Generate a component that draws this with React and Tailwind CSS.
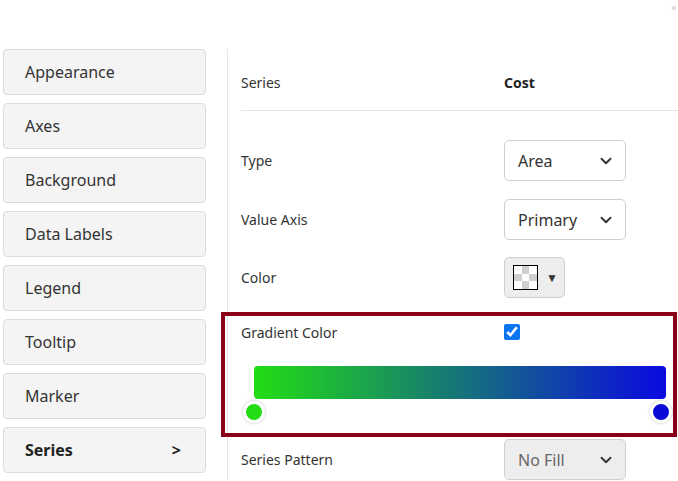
import { ChevronDown } from 'lucide-react';

const tabs = ['Appearance', 'Axes', 'Background', 'Data Labels', 'Legend', 'Tooltip', 'Marker', 'Series'];

function Select({ value, muted }) {
  return (
    <div className={`flex h-[41px] w-[122px] items-center justify-between rounded-[5px] border border-[#cfcfcf] pl-[13px] pr-[10px] text-[16px] ${muted ? 'bg-[#ededed] text-[#666]' : 'bg-white text-[#333]'}`}>
      <span>{value}</span>
      <ChevronDown size={18} strokeWidth={2.5} className="text-[#333]" />
    </div>
  );
}

export default function App() {
  return (
    <div className="relative h-[481px] w-[678px] overflow-hidden bg-white font-['Liberation_Sans',Arial,sans-serif] text-[#333]">
      <span className="absolute right-[1px] top-[2px] text-[11px] leading-none text-[#ccc]">×</span>
      <div className="flex pt-[49px]">
        <div className="flex w-[206px] flex-col gap-[8px] pl-[3px]">
          {tabs.map((t) => (
            <div key={t} className={`flex h-[46px] items-center justify-between rounded-[4px] border border-[#dcdcdc] bg-[#f4f4f4] pl-[21px] pr-[24px] text-[16px] ${t === 'Series' ? 'font-bold text-[#222]' : 'text-[#333]'}`}>
              <span>{t}</span>
              {t === 'Series' && <span>&gt;</span>}
            </div>
          ))}
        </div>
        <div className="ml-[21px] flex-1 border-l border-[#e8e8e8] pl-[13px] text-[14px]">
          <div className="flex h-[62px] items-center border-b border-[#e5e5e5] pt-[6px]">
            <span className="w-[263px]">Series</span>
            <span className="font-bold text-[#222]">Cost</span>
          </div>
          <div className="mt-[29px] flex h-[41px] items-center">
            <span className="w-[263px]">Type</span>
            <Select value="Area" />
          </div>
          <div className="mt-[18px] flex h-[41px] items-center">
            <span className="w-[263px]">Value Axis</span>
            <Select value="Primary" />
          </div>
          <div className="mt-[17px] flex h-[41px] items-center">
            <span className="w-[263px]">Color</span>
            <div className="flex h-[41px] w-[61px] items-center gap-[8px] rounded-[5px] border border-[#cfcfcf] bg-[#ededed] pl-[8px]">
              <div className="grid h-[25px] w-[25px] grid-cols-3 grid-rows-3 border border-black">
                {[0, 1, 0, 1, 0, 1, 0, 1, 0].map((c, i) => (
                  <div key={i} className={c ? 'bg-[#cfcfcf]' : 'bg-white'} />
                ))}
              </div>
              <span className="text-[12px] text-[#333]">▼</span>
            </div>
          </div>
          <div className="-ml-[20px] mt-[14px] h-[125px] w-[456px] border-[4px] border-[#8b0019] pl-[16px] pt-[6px]">
            <div className="flex h-[20px] items-center">
              <span className="w-[263px]">Gradient Color</span>
              <input type="checkbox" defaultChecked className="h-[16px] w-[16px] accent-[#0b74f0]" />
            </div>
            <div className="relative ml-[13px] mt-[24px] h-[33px] w-[412px] rounded-[4px] bg-[linear-gradient(to_right,#22dd14,#0a0ae0)]">
              <div className="absolute left-[-11px] top-[35px] h-[22px] w-[22px] rounded-full border-[3px] border-white bg-[#22dd14] shadow-[0_0_3px_rgba(0,0,0,0.25)]" />
              <div className="absolute right-[-6px] top-[35px] h-[22px] w-[22px] rounded-full border-[3px] border-white bg-[#0a0ad8] shadow-[0_0_3px_rgba(0,0,0,0.25)]" />
            </div>
          </div>
          <div className="mt-[2px] flex h-[41px] items-center">
            <span className="w-[263px]">Series Pattern</span>
            <Select value="No Fill" muted />
          </div>
        </div>
      </div>
    </div>
  );
}
